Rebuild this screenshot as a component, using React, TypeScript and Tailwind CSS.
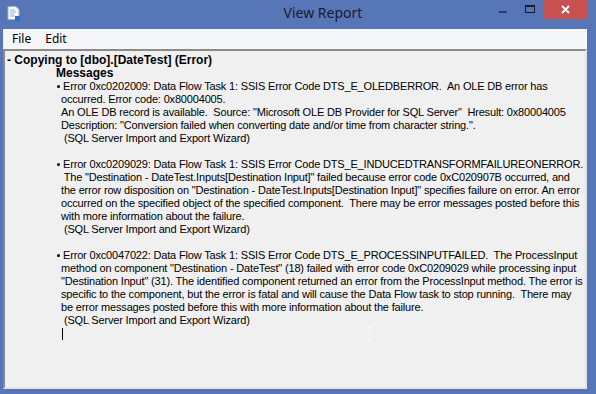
import React from "react";

const B1 = [
  "Error 0xc0202009: Data Flow Task 1: SSIS Error Code DTS_E_OLEDBERROR.  An OLE DB error has",
  "occurred. Error code: 0x80004005.",
  "An OLE DB record is available.  Source: \"Microsoft OLE DB Provider for SQL Server\"  Hresult: 0x80004005",
  "Description: \"Conversion failed when converting date and/or time from character string.\".",
  " (SQL Server Import and Export Wizard)",
];
const B2 = [
  "Error 0xc0209029: Data Flow Task 1: SSIS Error Code DTS_E_INDUCEDTRANSFORMFAILUREONERROR.",
  " The \"Destination - DateTest.Inputs[Destination Input]\" failed because error code 0xC020907B occurred, and",
  "the error row disposition on \"Destination - DateTest.Inputs[Destination Input]\" specifies failure on error. An error",
  "occurred on the specified object of the specified component.  There may be error messages posted before this",
  "with more information about the failure.",
  " (SQL Server Import and Export Wizard)",
];
const B3 = [
  "Error 0xc0047022: Data Flow Task 1: SSIS Error Code DTS_E_PROCESSINPUTFAILED.  The ProcessInput",
  "method on component \"Destination - DateTest\" (18) failed with error code 0xC0209029 while processing input",
  "\"Destination Input\" (31). The identified component returned an error from the ProcessInput method. The error is",
  "specific to the component, but the error is fatal and will cause the Data Flow task to stop running.  There may",
  "be error messages posted before this with more information about the failure.",
  " (SQL Server Import and Export Wizard)",
];

function Block({ lines }: { lines: string[] }) {
  return (
    <div className="flex flex-col">
      {lines.map((l, i) => (
        <div key={i} className="h-[13px] leading-[13px] whitespace-pre flex items-center">
          {i === 0 ? (
            <>
              <span className="w-[7px] pl-[1px] flex items-center">
                <span className="block w-[3px] h-[3px] rounded-full bg-black" />
              </span>
              <span>{l}</span>
            </>
          ) : (
            <span className="pl-[5px]">{l}</span>
          )}
        </div>
      ))}
    </div>
  );
}

export default function App() {
  return (
    <div
      className="w-[596px] h-[394px] bg-[#5776b8] flex flex-col overflow-hidden"
      style={{ fontFamily: "'Liberation Sans', Arial, sans-serif" }}
    >
      {/* Title bar */}
      <div className="h-[29px] relative flex items-center justify-center">
        <svg className="absolute left-[7px] top-[6px]" width="14" height="15" viewBox="0 0 14 15">
          <path d="M1 0.5h8l3 3v10h-11z" fill="#f4f7fb" stroke="#9db1cf" />
          <path d="M3 4h5M3 6h6M3 8h4M3 10h5" stroke="#8fa6c8" strokeWidth="0.8" />
          <rect x="8" y="10" width="5" height="5" fill="#2e6fd1" />
        </svg>
        <span
          className="text-[14px] text-[#1b1b2b] pl-[50px] mt-[-5px]"
          style={{ fontFamily: "'Noto Sans', 'Open Sans', sans-serif" }}
        >
          View Report
        </span>
        <div className="absolute left-[499px] top-[11px] w-[8px] h-[2px] bg-[#2c3e66]" />
        <div className="absolute left-[525px] top-[5px] w-[10px] h-[8px] border border-[#1c1c1c] border-t-2" />
        <div className="absolute left-[543px] top-0 w-[45px] h-[19px] bg-[#c75050] flex items-center justify-center">
          <svg width="9" height="9" viewBox="0 0 9 9">
            <path d="M1 1L8 8M8 1L1 8" stroke="#fff" strokeWidth="1.8" />
          </svg>
        </div>
      </div>

      {/* Body */}
      <div className="flex-1 flex flex-col pl-[3px] pr-[9px] pb-[5px]">
        <div
          className="h-[20px] bg-[#f5f6f7] flex items-center gap-[14px] pl-[9px] text-[12px] text-black"
          style={{ fontFamily: "'Noto Sans', 'Open Sans', sans-serif" }}
        >
          <span>File</span>
          <span>Edit</span>
        </div>
        <div className="relative flex-1 bg-[#f0f0f0] border-2 border-t-[#8a8a8a] border-l-[#8a8a8a] border-b-[#e3e3e3] border-r-[#e3e3e3] text-[11px] text-black pt-[3px] pl-[2px] overflow-hidden">
          <div className="font-bold h-[13px] leading-[13px] whitespace-pre text-[12px]">- Copying to [dbo].[DateTest] (Error)</div>
          <div className="pl-[49px] flex flex-col tracking-[-0.17px]">
            <div className="font-bold h-[13px] leading-[13px] text-[12px] tracking-normal">Messages</div>
            <div className="flex flex-col gap-[13px]">
              <Block lines={B1} />
              <Block lines={B2} />
              <Block lines={B3} />
            </div>
            <div className="h-[13px] pl-[6px] flex items-center">
              <div className="w-[1px] h-[12px] bg-black" />
            </div>
          </div>
          {/* faint mouse I-beam */}
          <svg className="absolute left-[361px] top-[276px]" width="7" height="14" viewBox="0 0 7 14">
            <path d="M1 0.5h5M3.5 0.5v13M1 13.5h5" stroke="#fafafa" strokeWidth="1" />
          </svg>
        </div>
      </div>
    </div>
  );
}
